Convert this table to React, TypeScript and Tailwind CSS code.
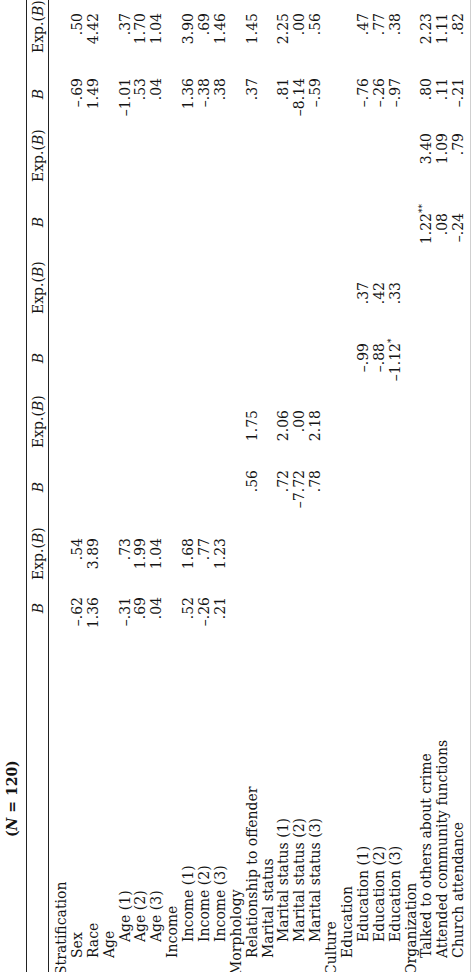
import React from "react"

type Row = {
  label: string
  level: 0 | 1 | 2
  vals?: (string | null)[]
}

// right edges of the ten numeric columns, expressed as cell widths
const cellW = ["w-[35px]", "w-[59px]", "w-[68px]", "w-[60px]", "w-[67px]", "w-[61px]", "w-[69px]", "w-[80px]", "w-[55px]", "w-[65px]"]

// header labels, each centred over its column
const headers = [
  { t: "B", ml: "ml-[339px]" },
  { t: "Exp", ml: "ml-[3px]" },
  { t: "B", ml: "ml-[18px]" },
  { t: "Exp", ml: "ml-[14px]" },
  { t: "B", ml: "ml-[15px]" },
  { t: "Exp", ml: "ml-[19px]" },
  { t: "B", ml: "ml-[17px]" },
  { t: "Exp", ml: "ml-[15px]" },
  { t: "B", ml: "ml-[13px]" },
  { t: "Exp", ml: "ml-[16px]" },
]

const indent = {
  0: "-ml-[3px]",
  1: "pl-[14px]",
  2: "pl-[30px]",
}

const _ = null

const rows: Row[] = [
  { label: "Stratification", level: 0 },
  { label: "Sex", level: 1, vals: ["–.62", ".54", _, _, _, _, _, _, "–.69", ".50"] },
  { label: "Race", level: 1, vals: ["1.36", "3.89", _, _, _, _, _, _, "1.49", "4.42"] },
  { label: "Age", level: 1 },
  { label: "Age (1)", level: 2, vals: ["–.31", ".73", _, _, _, _, _, _, "–1.01", ".37"] },
  { label: "Age (2)", level: 2, vals: [".69", "1.99", _, _, _, _, _, _, ".53", "1.70"] },
  { label: "Age (3)", level: 2, vals: [".04", "1.04", _, _, _, _, _, _, ".04", "1.04"] },
  { label: "Income", level: 1 },
  { label: "Income (1)", level: 2, vals: [".52", "1.68", _, _, _, _, _, _, "1.36", "3.90"] },
  { label: "Income (2)", level: 2, vals: ["–.26", ".77", _, _, _, _, _, _, "–.38", ".69"] },
  { label: "Income (3)", level: 2, vals: [".21", "1.23", _, _, _, _, _, _, ".38", "1.46"] },
  { label: "Morphology", level: 0 },
  { label: "Relationship to offender", level: 1, vals: [_, _, ".56", "1.75", _, _, _, _, ".37", "1.45"] },
  { label: "Marital status", level: 1 },
  { label: "Marital status (1)", level: 2, vals: [_, _, ".72", "2.06", _, _, _, _, ".81", "2.25"] },
  { label: "Marital status (2)", level: 2, vals: [_, _, "–7.72", ".00", _, _, _, _, "–8.14", ".00"] },
  { label: "Marital status (3)", level: 2, vals: [_, _, ".78", "2.18", _, _, _, _, "–.59", ".56"] },
  { label: "Culture", level: 0 },
  { label: "Education", level: 1 },
  { label: "Education (1)", level: 2, vals: [_, _, _, _, "–.99", ".37", _, _, "–.76", ".47"] },
  { label: "Education (2)", level: 2, vals: [_, _, _, _, "–.88", ".42", _, _, "–.26", ".77"] },
  { label: "Education (3)", level: 2, vals: [_, _, _, _, "–1.12*", ".33", _, _, "–.97", ".38"] },
  { label: "Organization", level: 0 },
  { label: "Talked to others about crime", level: 1, vals: [_, _, _, _, _, _, "1.22**", "3.40", ".80", "2.23"] },
  { label: "Attended community functions", level: 1, vals: [_, _, _, _, _, _, ".08", "1.09", ".11", "1.11"] },
  { label: "Church attendance", level: 1, vals: [_, _, _, _, _, _, "–.24", ".79", "–.21", ".82"] },
]

function Num({ v }: { v: string }) {
  const m = v.match(/^([^*]+)(\**)$/)
  const digits = m ? m[1] : v
  const stars = m ? m[2] : ""
  return (
    <span className="relative">
      {digits}
      {stars && <span className="absolute left-full top-[-3px] text-[9px]">{stars}</span>}
    </span>
  )
}

function Header({ t }: { t: string }) {
  if (t === "B") return <i>B</i>
  return (
    <span>
      Exp.(<i>B</i>)
    </span>
  )
}

export default function App() {
  return (
    <div className="w-[474px] h-[972px] overflow-hidden bg-white">
      <div
        className="w-[972px] h-[474px] origin-top-left [transform:translateY(972px)_rotate(-90deg)] flex flex-col text-[14px] text-[#141414]"
        style={{ fontFamily: '"DejaVu Serif", "Liberation Serif", serif' }}
      >
        {/* title */}
        <div className="h-[26px] pt-[4px] pl-[135px] leading-[16px] font-bold whitespace-nowrap">
          (<i>N</i> = 120)
        </div>
        <div className="h-px bg-[#222]" />

        {/* column heads */}
        <div className="flex h-[21px] pt-[2px] leading-[19px] whitespace-nowrap">
          {headers.map((h, i) => (
            <div key={i} className={`${h.ml} w-[50px] shrink-0 text-center`}>
              <Header t={h.t} />
            </div>
          ))}
        </div>
        <div className="h-px bg-[#222]" />

        {/* body */}
        <div className="pt-[5px] flex flex-col">
          {rows.map((r, i) => (
            <div key={i} className="flex h-[15.9px] leading-[15.9px] whitespace-nowrap">
              <div className={`w-[340px] shrink-0 ${indent[r.level]}`}>{r.label}</div>
              {r.vals &&
                r.vals.map((v, j) => (
                  <div key={j} className={`${cellW[j]} shrink-0 text-right`}>
                    {v && <Num v={v} />}
                  </div>
                ))}
            </div>
          ))}
        </div>
        <div className="mt-[3px] h-px bg-[#cfcfcf]" />
      </div>
    </div>
  )
}
